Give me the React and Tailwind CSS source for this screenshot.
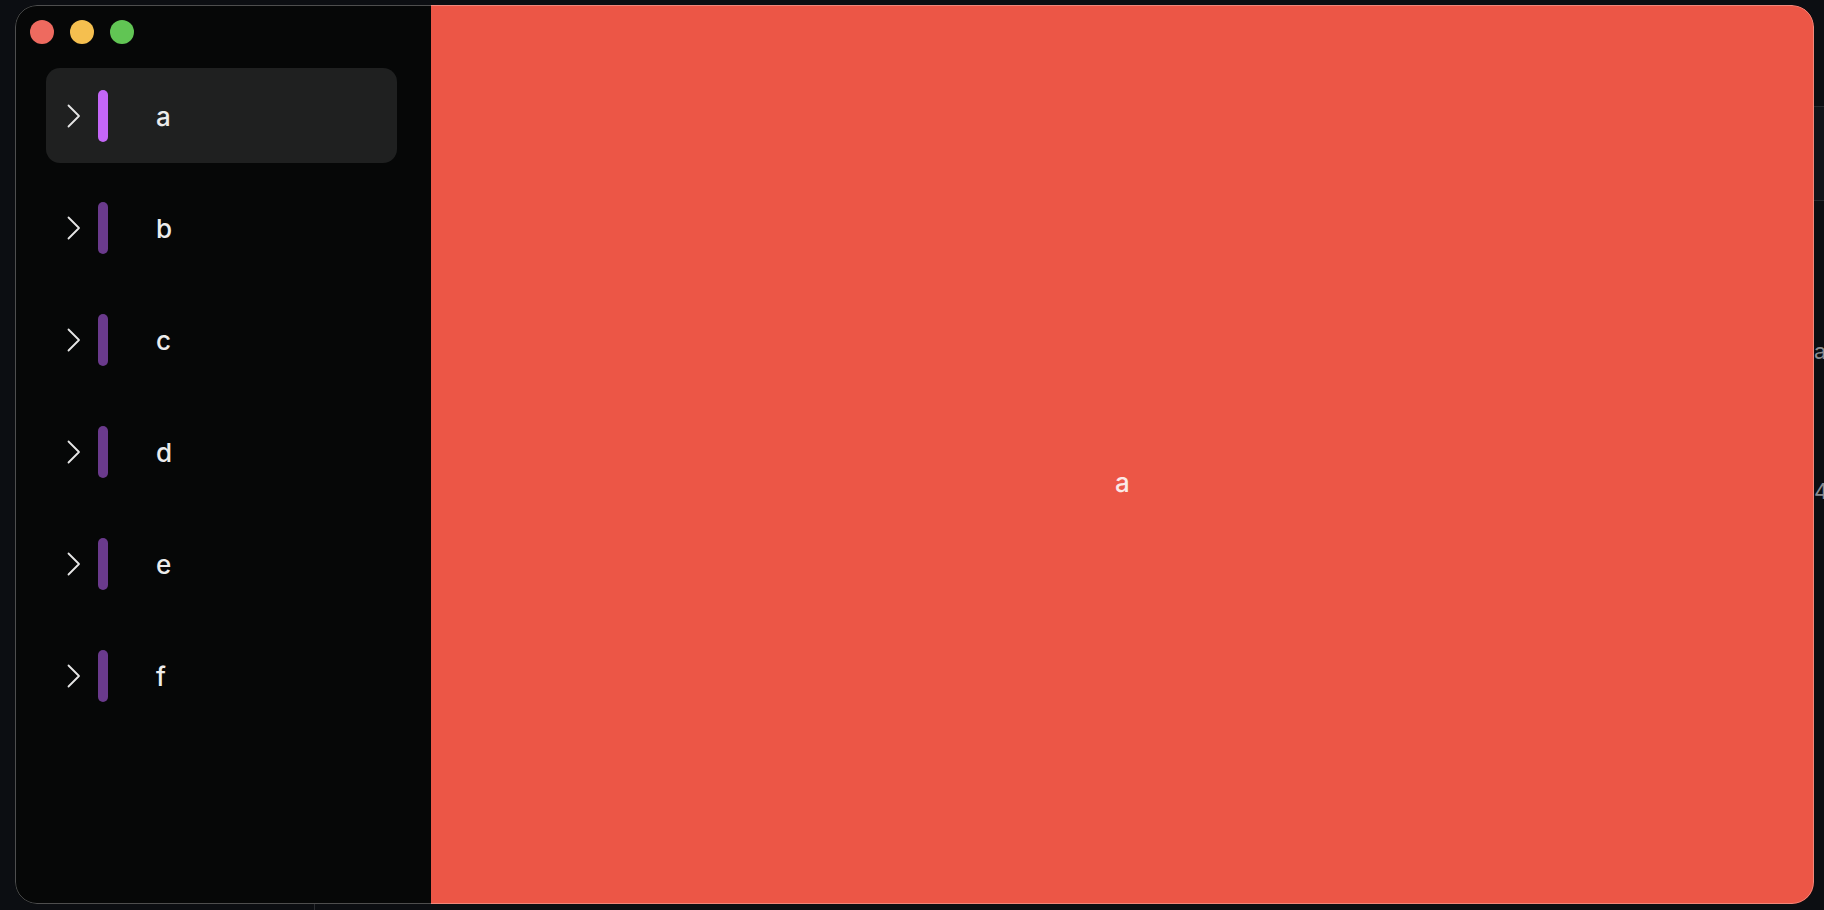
import { useState } from "react";

const items = ["a", "b", "c", "d", "e", "f"];

const Chevron = () => (
  <svg width="14" height="24" viewBox="0 0 14 24" fill="none" className="shrink-0">
    <path d="M1.5 1.5 L12 12 L1.5 22.5" stroke="#e6e6e6" strokeWidth="1.8" strokeLinecap="round" strokeLinejoin="round" />
  </svg>
);

const Row = ({ label, active, onClick }) => (
  <div
    onClick={onClick}
    className={`flex items-center h-[95px] w-[351px] rounded-[14px] pl-[21px] cursor-default ${active ? "bg-[#1f2020]" : ""}`}
  >
    <Chevron />
    <div className={`ml-[17px] w-[10px] h-[52px] rounded-full ${active ? "bg-[#c466f7]" : "bg-[#6a3a8c]"}`} />
    <span className="ml-[48px] mt-[2px] text-[26px] leading-none font-[450] text-[#ececec]">{label}</span>
  </div>
);

export default function App() {
  const [selected, setSelected] = useState("a");

  return (
    <div className="relative w-[1824px] h-[910px] bg-[#0c0e12] overflow-hidden" style={{ fontFamily: "Inter, 'Noto Sans', sans-serif" }}>
      {/* faint stuff from the app behind */}
      <div className="absolute left-[1814px] top-[106px] w-[10px] h-[95px] bg-[#111419] border-y border-[#26292e]" />
      <span className="absolute left-[1814px] top-[340px] w-[10px] overflow-hidden text-[22px] leading-none text-[#8a8c90]">a</span>
      <span className="absolute left-[1814px] top-[480px] w-[10px] overflow-hidden text-[22px] leading-none text-[#8a8c90]">4</span>
      <div className="absolute left-[314px] top-[904px] w-[1px] h-[6px] bg-[#2a2c30]" />

      <div className="relative ml-[15px] mt-[5px] w-[1799px] h-[899px] rounded-[22px] overflow-hidden bg-[#060707] flex">
        <aside className="w-[416px] shrink-0 flex flex-col">
          <div className="flex items-start gap-[16px] pl-[15px] pt-[15px] h-[63px]">
            <span className="w-[24px] h-[24px] rounded-full bg-[#ee6a5f]" />
            <span className="w-[24px] h-[24px] rounded-full bg-[#f5bf4f]" />
            <span className="w-[24px] h-[24px] rounded-full bg-[#61c554]" />
          </div>
          <nav className="flex flex-col gap-[17px] pl-[31px]">
            {items.map((it) => (
              <Row key={it} label={it} active={selected === it} onClick={() => setSelected(it)} />
            ))}
          </nav>
        </aside>

        <main className="flex-1 bg-[#ec5646] rounded-tr-[22px] flex items-center justify-center pt-[56px]">
          <span className="text-[26px] leading-none font-[450] text-[#fbe9e6]">{selected}</span>
        </main>

        <div className="pointer-events-none absolute inset-0 rounded-[22px] border-[1.5px] border-[#ffffff4a]" />
      </div>
    </div>
  );
}
